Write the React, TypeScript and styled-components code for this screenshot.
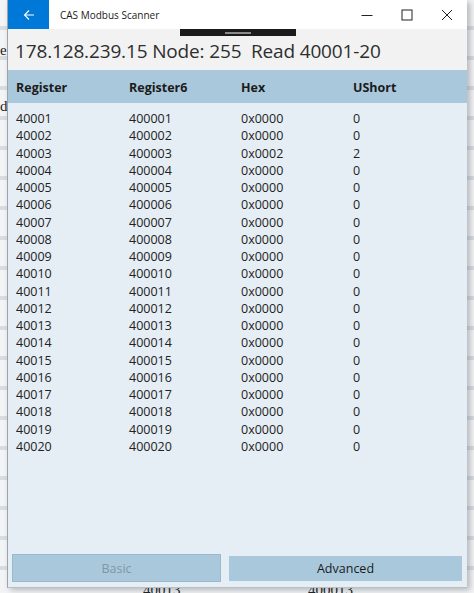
import styled, { createGlobalStyle } from "styled-components";

const GlobalStyle = createGlobalStyle`
  html, body {
    margin: 0;
    padding: 0;
    overflow: hidden;
  }
  body {
    font-family: "Open Sans", "Noto Sans", Arial, sans-serif;
  }
`;

const registers = Array.from({ length: 20 }, (_, i) => ({
  reg: 40001 + i,
  reg6: 400001 + i,
  value: i === 2 ? 2 : 0,
}));

const toHex = (n: number) => "0x" + n.toString(16).toUpperCase().padStart(4, "0");

// desktop behind the window: striped list of another app
const Desktop = styled.div`
  width: 474px;
  height: 593px;
  position: relative;
  overflow: hidden;
  background: repeating-linear-gradient(
    180deg,
    #f3f4f5 0px,
    #f3f4f5 26px,
    #d9dde1 26px,
    #d9dde1 30px
  );
`;

const BehindText = styled.span<{ $top: number; $left: number }>`
  position: absolute;
  top: ${(p) => p.$top}px;
  left: ${(p) => p.$left}px;
  font-family: "Liberation Serif", serif;
  font-size: 15px;
  line-height: 15px;
  color: #222;
`;

const Window = styled.div`
  position: absolute;
  left: 7px;
  top: 0;
  width: 460px;
  height: 588px;
  display: flex;
  flex-direction: column;
  background: #e6eef5;
  border-left: 1px solid #9aa4ad;
  border-bottom: 1px solid #b6c0c8;
  box-shadow: 3px 2px 6px rgba(60, 70, 80, 0.35);
  box-sizing: border-box;
`;

const TitleBar = styled.div`
  height: 29px;
  flex: none;
  display: flex;
  align-items: center;
  background: #ffffff;
`;

const BackButton = styled.div`
  width: 41px;
  height: 29px;
  background: #0078d7;
  display: flex;
  align-items: center;
  justify-content: center;
`;

const Title = styled.div`
  margin-left: 11px;
  font-size: 10px;
  color: #1a1a1a;
  flex: 1;
`;

const Controls = styled.div`
  display: flex;
  height: 29px;
`;

const ControlButton = styled.div`
  width: 40px;
  height: 29px;
  display: flex;
  align-items: center;
  justify-content: center;
`;

const HeaderArea = styled.div`
  position: relative;
  height: 41px;
  flex: none;
  background: #f2f2f2;
  display: flex;
  align-items: flex-end;
  padding: 0 0 6px 7px;
  box-sizing: border-box;
`;

const DragHandle = styled.div`
  position: absolute;
  top: 0;
  left: 172px;
  width: 116px;
  height: 7px;
  background: #1b1b1b;
  display: flex;
  align-items: center;
  justify-content: center;
  &::after {
    content: "";
    width: 26px;
    height: 2px;
    background: #8a8a8a;
  }
`;

const HeaderTitle = styled.div`
  font-size: 19px;
  color: #2e2e2e;
  white-space: pre;
  letter-spacing: -0.15px;
`;

const Grid = styled.div`
  display: grid;
  grid-template-columns: 113px 112px 112px 1fr;
  padding-left: 8px;
`;

const HeadRow = styled(Grid)`
  height: 33px;
  flex: none;
  align-items: center;
  padding-top: 1px;
  box-sizing: border-box;
  background: #a9c8dc;
  font-weight: 700;
  font-size: 12.5px;
  color: #1b1b1b;
`;

const Rows = styled.div`
  flex: 1;
  padding-top: 7px;
`;

const Row = styled(Grid)`
  height: 17.26px;
  align-items: center;
  font-size: 12.5px;
  color: #222;
`;

const ButtonBar = styled.div`
  display: grid;
  grid-template-columns: 209px 233px;
  column-gap: 8px;
  padding: 0 0 5px 4px;
  align-items: center;
`;

const ActionButton = styled.div<{ $disabled?: boolean }>`
  height: ${(p) => (p.$disabled ? 28 : 25)}px;
  display: flex;
  align-items: center;
  justify-content: center;
  background: #a9c8dc;
  font-size: 12.5px;
  color: ${(p) => (p.$disabled ? "#7f97a8" : "#1b1b1b")};
  border: ${(p) => (p.$disabled ? "1px solid #9cb8cb" : "none")};
  box-sizing: border-box;
`;

export default function App() {
  return (
    <>
      <GlobalStyle />
      <Desktop>
        <BehindText $top={43} $left={0}>e</BehindText>
        <BehindText $top={99} $left={0}>d</BehindText>
        <BehindText $top={583} $left={143}>40013</BehindText>
        <BehindText $top={583} $left={308}>400013</BehindText>
        <Window>
          <TitleBar>
            <BackButton>
              <svg width="12" height="12" viewBox="0 0 12 12">
                <path d="M11 6H1.5M6 1.5L1.5 6 6 10.5" stroke="#fff" strokeWidth="1.1" fill="none" />
              </svg>
            </BackButton>
            <Title>CAS Modbus Scanner</Title>
            <Controls>
              <ControlButton>
                <svg width="12" height="12" viewBox="0 0 12 12">
                  <path d="M0.5 6.5H11.5" stroke="#222" strokeWidth="1" />
                </svg>
              </ControlButton>
              <ControlButton>
                <svg width="12" height="12" viewBox="0 0 12 12">
                  <rect x="1" y="1" width="10" height="10" stroke="#222" strokeWidth="1" fill="none" />
                </svg>
              </ControlButton>
              <ControlButton>
                <svg width="12" height="12" viewBox="0 0 12 12">
                  <path d="M1 1L11 11M11 1L1 11" stroke="#222" strokeWidth="1" />
                </svg>
              </ControlButton>
            </Controls>
          </TitleBar>
          <HeaderArea>
            <DragHandle />
            <HeaderTitle>178.128.239.15 Node: 255  Read 40001-20</HeaderTitle>
          </HeaderArea>
          <HeadRow>
            <span>Register</span>
            <span>Register6</span>
            <span>Hex</span>
            <span>UShort</span>
          </HeadRow>
          <Rows>
            {registers.map((r) => (
              <Row key={r.reg}>
                <span>{r.reg}</span>
                <span>{r.reg6}</span>
                <span>{toHex(r.value)}</span>
                <span>{r.value}</span>
              </Row>
            ))}
          </Rows>
          <ButtonBar>
            <ActionButton $disabled>Basic</ActionButton>
            <ActionButton>Advanced</ActionButton>
          </ButtonBar>
        </Window>
      </Desktop>
    </>
  );
}
